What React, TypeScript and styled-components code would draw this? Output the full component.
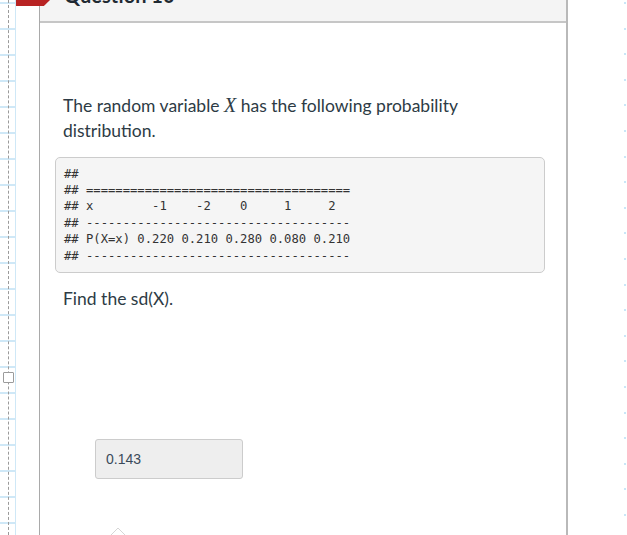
import React from 'react'
import styled, { createGlobalStyle } from 'styled-components'

const GlobalStyle = createGlobalStyle`
  html, body {
    margin: 0;
    padding: 0;
    background: #fff;
    overflow: hidden;
  }
  body {
    font-family: Lato, "Open Sans", sans-serif;
    color: #2d3b45;
  }
`

const Page = styled.div`
  display: flex;
  width: 627px;
  height: 535px;
  overflow: hidden;
  position: relative;
`

const LeftRail = styled.div`
  position: relative;
  flex: 0 0 15px;
  height: 100%;
  border-right: 1px solid #cfe8f7;
  background:
    repeating-linear-gradient(
      to bottom,
      transparent 0px,
      transparent 2px,
      #cfe8f7 2px,
      #cfe8f7 4px,
      transparent 4px,
      transparent 26px
    );

  &::after {
    content: '';
    position: absolute;
    left: 8px;
    top: 0;
    bottom: 0;
    border-left: 1px dashed #9a9a9a;
  }
`

const RailCheckbox = styled.div`
  position: absolute;
  left: 3px;
  top: 372px;
  width: 9px;
  height: 9px;
  border: 1px solid #9b9b9b;
  border-radius: 1px;
  background: #fff;
  z-index: 1;
`

const Gutter = styled.div`
  flex: 0 0 23px;
`

const RedTab = styled.div`
  position: absolute;
  left: 16px;
  top: 0;
  width: 34px;
  height: 6px;
  background: #b82323;
  clip-path: polygon(0 0, 100% 0, 82% 100%, 0 100%);
  z-index: 2;
`

const Card = styled.div`
  flex: 0 0 526px;
  display: flex;
  flex-direction: column;
  border-left: 1px solid #a9a9a9;
  border-right: 2px solid #b9b9b9;
  background: #fff;
`

/* the page is scrolled: the header's title sits mostly above the top edge */
const Header = styled.div`
  height: 21px;
  display: flex;
  align-items: flex-start;
  justify-content: space-between;
  padding: 0 24px 0 24px;
  background: #f4f4f4;
  border-bottom: 2px solid #c6c6c6;
`

const Title = styled.div`
  font-family: Lato, sans-serif;
  font-weight: 700;
  font-size: 20px;
  line-height: 20px;
  color: #1f2a33;
  margin-top: -15px;
`

const Points = styled.div`
  font-size: 14px;
  line-height: 14px;
  color: #555;
  margin-top: -14px;
  margin-right: 2px;
`

const Body = styled.div`
  padding: 0 21px 0 15px;
  display: flex;
  flex-direction: column;
`

const Paragraph = styled.p<{ $top: number }>`
  margin: ${p => p.$top}px 0 0 8px;
  font-size: 17.5px;
  line-height: 25px;
  color: #2d3b45;
`

const MathVar = styled.span`
  font-family: "Liberation Serif", "DejaVu Serif", serif;
  font-style: italic;
  font-size: 20px;
  line-height: 1;
`

const CodeBlock = styled.pre`
  margin: 14px 0 0 0;
  padding: 8px 8px 8px 8px;
  background: #f5f5f5;
  border: 1px solid #cccccc;
  border-radius: 5px;
  font-family: "DejaVu Sans Mono", "Liberation Mono", monospace;
  font-size: 12.2px;
  line-height: 16.4px;
  color: #333;
  white-space: pre;
`

const AnswerBox = styled.div`
  margin: 128px 0 0 40px;
  width: 136px;
  height: 38px;
  padding: 0 0 0 10px;
  display: flex;
  align-items: center;
  background: #eeeeee;
  border: 1px solid #cccccc;
  border-radius: 3px;
  font-family: "Liberation Sans", Arial, sans-serif;
  font-size: 14px;
  color: #3a4a5a;
`

const Caret = styled.svg`
  margin: 48px 0 0 55px;
  display: block;
`

const RightArea = styled.div`
  flex: 1;
  height: 100%;
  display: flex;
  justify-content: flex-end;
`

const DotColumn = styled.div`
  width: 2px;
  height: 100%;
  margin-right: 1px;
  background: repeating-linear-gradient(
    to bottom,
    transparent 0px,
    transparent 2px,
    #c9e6f7 2px,
    #c9e6f7 4px,
    transparent 4px,
    transparent 25.6px
  );
`

const codeLines = [
  '##',
  '## ' + '='.repeat(36),
  '## x        -1    -2    0     1     2',
  '## ' + '-'.repeat(36),
  '## P(X=x) 0.220 0.210 0.280 0.080 0.210',
  '## ' + '-'.repeat(36),
]

export default function App() {
  return (
    <>
      <GlobalStyle />
      <Page>
        <LeftRail>
          <RailCheckbox />
        </LeftRail>
        <Gutter />
        <RedTab />
        <Card>
          <Header>
            <Title>Question 10</Title>
            <Points>1 pts</Points>
          </Header>
          <Body>
            <Paragraph $top={70}>
              The random variable <MathVar>X</MathVar> has the following probability distribution.
            </Paragraph>
            <CodeBlock>{codeLines.join('\n')}</CodeBlock>
            <Paragraph $top={13}>Find the sd(X).</Paragraph>
            <AnswerBox>0.143</AnswerBox>
            <Caret width="16" height="8" viewBox="0 0 16 8">
              <path d="M1 8 L8 1 L15 8" fill="none" stroke="#d6d6d6" strokeWidth="1" />
            </Caret>
          </Body>
        </Card>
        <RightArea>
          <DotColumn />
        </RightArea>
      </Page>
    </>
  )
}
